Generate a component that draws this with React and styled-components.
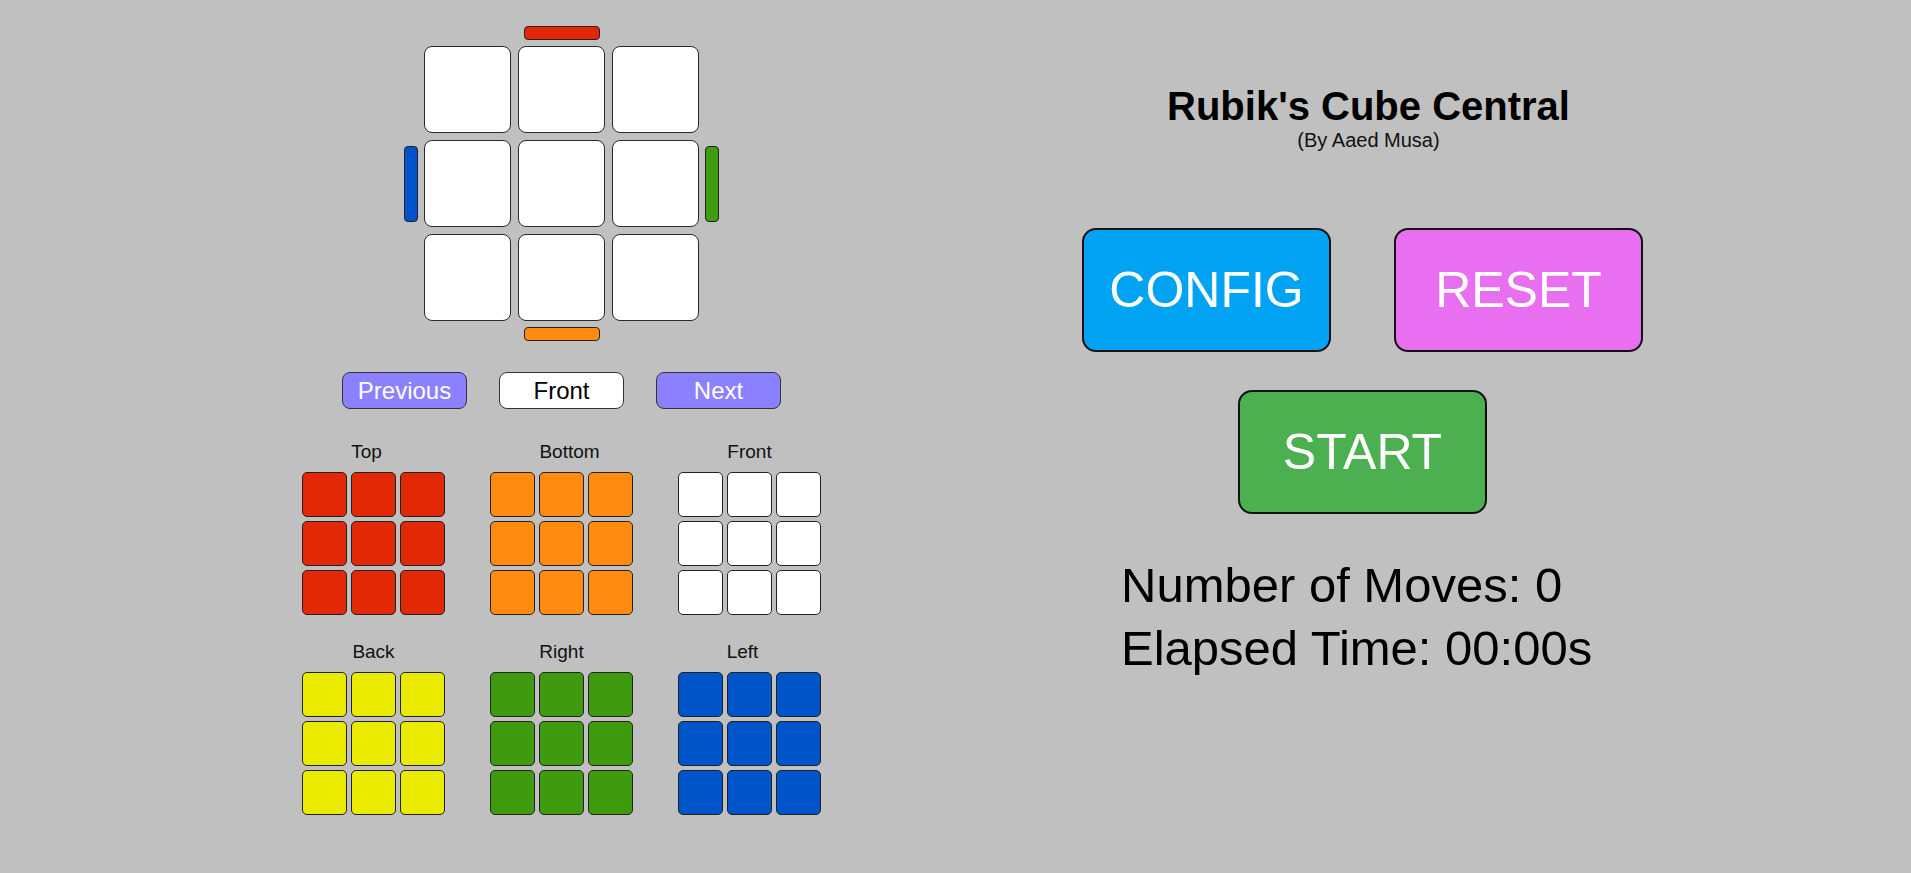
import React from 'react';
import styled, { createGlobalStyle } from 'styled-components';

const COLORS = {
    red: '#e32805',
    orange: '#ff8c11',
    white: '#ffffff',
    yellow: '#ebeb00',
    green: '#3d9b0d',
    blue: '#0054c9',
};

const GlobalStyle = createGlobalStyle`
    html, body {
        margin: 0;
        padding: 0;
        background-color: #c0c0c0;
        font-family: "Liberation Sans", Arial, sans-serif;
        color: #000;
    }
`;

const Page = styled.div`
    min-height: 100vh;
    display: flex;
    align-items: flex-start;
    gap: 261px;
    padding: 26px 0 0 302px;
    box-sizing: border-box;
`;

const LeftPanel = styled.div`
    width: 519px;
    display: flex;
    flex-direction: column;
    align-items: center;
`;

const RightPanel = styled.div`
    width: 561px;
    padding-top: 57px;
    display: flex;
    flex-direction: column;
    align-items: center;
`;

// gros cube (face courante)
const CubeView = styled.div`
    display: flex;
    flex-direction: column;
    align-items: center;
    gap: 6px;
`;

const CubeMiddle = styled.div`
    display: flex;
    align-items: center;
    gap: 6px;
`;

const EdgeBar = styled.div`
    width: ${(p) => (p.$vertical ? '14px' : '76px')};
    height: ${(p) => (p.$vertical ? '76px' : '14px')};
    background-color: ${(p) => p.$color};
    border: 1px solid #222;
    border-radius: 4px;
    box-sizing: border-box;
`;

const BigGrid = styled.div`
    display: grid;
    grid-template-columns: repeat(3, 87px);
    grid-auto-rows: 87px;
    gap: 7px;
`;

const BigSticker = styled.div`
    background-color: ${(p) => p.$color};
    border: 1px solid #2a2a2a;
    border-radius: 8px;
    box-sizing: border-box;
`;

const NavRow = styled.div`
    display: flex;
    gap: 32px;
    margin-top: 31px;
`;

const NavButton = styled.button`
    width: 125px;
    height: 37px;
    padding: 0;
    font-family: inherit;
    font-size: 24px;
    color: ${(p) => (p.$label ? '#000' : '#fff')};
    background-color: ${(p) => (p.$label ? '#fff' : '#8b80ff')};
    border: 1px solid #333;
    border-radius: 8px;
    cursor: pointer;
`;

const FacesGrid = styled.div`
    display: grid;
    grid-template-columns: repeat(3, 143px);
    column-gap: 45px;
    row-gap: 25px;
    margin-top: 31px;
`;

const Face = styled.div`
    display: flex;
    flex-direction: column;
    align-items: center;
    gap: 9px;
`;

const FaceLabel = styled.div`
    font-size: 19px;
    line-height: 23px;
    color: #111;
    transform: translateX(${(p) => p.$shift || 0}px);
`;

const SmallGrid = styled.div`
    display: grid;
    grid-template-columns: repeat(3, 45px);
    grid-auto-rows: 45px;
    gap: 4px;
`;

const SmallSticker = styled.div`
    background-color: ${(p) => p.$color};
    border: 1px solid #222;
    border-radius: 5px;
    box-sizing: border-box;
`;

const Header = styled.div`
    display: flex;
    flex-direction: column;
    align-items: center;
    padding-left: 12px;
`;

const Title = styled.h1`
    margin: 0;
    font-size: 40px;
    line-height: 46px;
    font-weight: bold;
`;

const Subtitle = styled.div`
    font-size: 20px;
    line-height: 23px;
    color: #111;
`;

const ButtonRow = styled.div`
    display: flex;
    justify-content: center;
    gap: 63px;
    margin-top: ${(p) => p.$top}px;
`;

const BigButton = styled.button`
    width: 249px;
    height: 124px;
    padding: 0;
    font-family: inherit;
    font-size: 50px;
    color: #fff;
    background-color: ${(p) => p.$bg};
    border: 2px solid #111;
    border-radius: 14px;
    cursor: pointer;
`;

const Stats = styled.div`
    align-self: stretch;
    margin-top: 40px;
    padding-left: 39px;
    font-size: 49px;
    line-height: 63px;
`;

const faces = [
    { name: 'Top', color: COLORS.red, shift: -7 },
    { name: 'Bottom', color: COLORS.orange, shift: 8 },
    { name: 'Front', color: COLORS.white, shift: 0 },
    { name: 'Back', color: COLORS.yellow, shift: 0 },
    { name: 'Right', color: COLORS.green, shift: 0 },
    { name: 'Left', color: COLORS.blue, shift: -7 },
];

const nine = Array.from({ length: 9 });

const App = () => {
    return (
        <>
            <GlobalStyle />
            <Page>
                <LeftPanel>
                    <CubeView>
                        <EdgeBar $color={COLORS.red} />
                        <CubeMiddle>
                            <EdgeBar $vertical $color={COLORS.blue} />
                            <BigGrid>
                                {nine.map((_, i) => (
                                    <BigSticker key={i} $color={COLORS.white} />
                                ))}
                            </BigGrid>
                            <EdgeBar $vertical $color={COLORS.green} />
                        </CubeMiddle>
                        <EdgeBar $color={COLORS.orange} />
                    </CubeView>

                    <NavRow>
                        <NavButton>Previous</NavButton>
                        <NavButton $label>Front</NavButton>
                        <NavButton>Next</NavButton>
                    </NavRow>

                    <FacesGrid>
                        {faces.map((face) => (
                            <Face key={face.name}>
                                <FaceLabel $shift={face.shift}>{face.name}</FaceLabel>
                                <SmallGrid>
                                    {nine.map((_, i) => (
                                        <SmallSticker key={i} $color={face.color} />
                                    ))}
                                </SmallGrid>
                            </Face>
                        ))}
                    </FacesGrid>
                </LeftPanel>

                <RightPanel>
                    <Header>
                        <Title>Rubik's Cube Central</Title>
                        <Subtitle>(By Aaed Musa)</Subtitle>
                    </Header>

                    <ButtonRow $top={76}>
                        <BigButton $bg="#03a3f4">CONFIG</BigButton>
                        <BigButton $bg="#e870f0">RESET</BigButton>
                    </ButtonRow>
                    <ButtonRow $top={38}>
                        <BigButton $bg="#4caf50">START</BigButton>
                    </ButtonRow>

                    <Stats>
                        <div>Number of Moves: 0</div>
                        <div>Elapsed Time: 00:00s</div>
                    </Stats>
                </RightPanel>
            </Page>
        </>
    );
};

export default App;
